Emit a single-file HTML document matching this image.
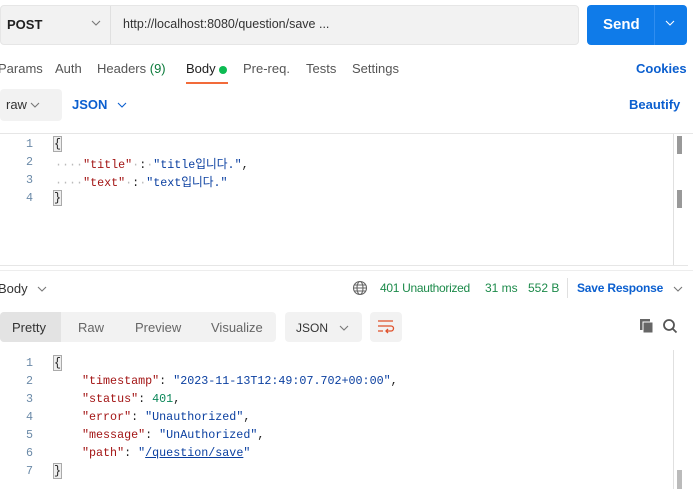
<!DOCTYPE html>
<html><head><meta charset="utf-8"><style>
*{margin:0;padding:0;box-sizing:border-box}
body{width:693px;height:489px;overflow:hidden;background:#fff;font-family:"Liberation Sans",sans-serif;font-size:13px;color:#212121;position:relative}
.a{position:absolute;white-space:nowrap}
.mono{font-family:"Liberation Mono","Noto Sans CJK KR",monospace;font-size:11.7px}
.ln{color:#6b8aa8;text-align:right;width:33px}
.k{color:#a31515}.s{color:#0a3fa0}.n{color:#098658}
.br{border:1px solid #aaa;background:#eee}
.g{color:#bbb}
</style></head><body>
<div class="a" style="left:0;top:5px;width:579px;height:40px;background:#f2f2f2;border:1px solid #e6e6e6;border-radius:4px"></div>
<div class="a" style="left:110px;top:6px;width:1px;height:38px;background:#e0e0e0"></div>
<div class="a" style="left:7px;top:17px;font-weight:bold;font-size:13px">POST</div>
<svg class="a" style="left:91px;top:20px" width="10" height="6" viewBox="0 0 10 6" fill="none" stroke="#777" stroke-width="1.1"><path d="M1 1l4 4 4-4"/></svg>
<div class="a" style="left:123px;top:17px;color:#333;font-size:12.5px">http://localhost:8080/question/save ...</div>
<div class="a" style="left:587px;top:5px;width:100px;height:40px;background:#0f7be9;border-radius:4px"></div>
<div class="a" style="left:654px;top:5px;width:1px;height:40px;background:#2f8df0"></div>
<div class="a" style="left:603px;top:16px;color:#fff;font-weight:bold;font-size:15px">Send</div>
<svg class="a" style="left:665px;top:20px" width="10" height="6" viewBox="0 0 10 6" fill="none" stroke="#fff" stroke-width="1.1"><path d="M1 1l4 4 4-4"/></svg>

<div class="a" style="left:-2px;top:61px;color:#555">Params</div>
<div class="a" style="left:55px;top:61px;color:#555">Auth</div>
<div class="a" style="left:97px;top:61px;color:#555">Headers <span style="color:#0a7a3a">(9)</span></div>
<div class="a" style="left:186px;top:61px;color:#212121">Body</div>
<div class="a" style="left:219px;top:66px;width:8px;height:8px;border-radius:50%;background:#0cbb52"></div>
<div class="a" style="left:186px;top:82px;width:42px;height:2px;background:#f26b3a"></div>
<div class="a" style="left:243px;top:61px;color:#555">Pre-req.</div>
<div class="a" style="left:306px;top:61px;color:#555">Tests</div>
<div class="a" style="left:352px;top:61px;color:#555">Settings</div>
<div class="a" style="left:636px;top:61px;color:#0b5fcf;font-weight:bold">Cookies</div>

<div class="a" style="left:0;top:89px;width:62px;height:32px;background:#f2f2f2;border-radius:4px"></div>
<div class="a" style="left:6px;top:97px;color:#333">raw</div>
<svg class="a" style="left:30px;top:102px" width="10" height="6" viewBox="0 0 10 6" fill="none" stroke="#777" stroke-width="1.1"><path d="M1 1l4 4 4-4"/></svg>
<div class="a" style="left:72px;top:97px;color:#0b5fcf;font-weight:bold">JSON</div>
<svg class="a" style="left:117px;top:102px" width="10" height="6" viewBox="0 0 10 6" fill="none" stroke="#0b5fcf" stroke-width="1.1"><path d="M1 1l4 4 4-4"/></svg>
<div class="a" style="left:629px;top:97px;color:#0b5fcf;font-weight:bold">Beautify</div>

<div class="a" style="left:0;top:133px;width:693px;height:1px;background:#e6e6e6"></div>
<div class="a" style="left:0;top:265px;width:688px;height:1px;background:#e6e6e6"></div>
<div class="a" style="left:673px;top:134px;width:1px;height:131px;background:#e0e0e0"></div>
<div class="a" style="left:677px;top:136px;width:5px;height:18px;background:#999"></div>
<div class="a" style="left:677px;top:190px;width:5px;height:18px;background:#999"></div>

<div class="a mono ln" style="top:137px">1</div>
<div class="a mono ln" style="top:155px">2</div>
<div class="a mono ln" style="top:173px">3</div>
<div class="a mono ln" style="top:191px">4</div>
<div class="a mono" style="left:53px;top:137px"><span class="br">{</span></div>
<div class="a mono" style="left:55px;top:155px"><span class="g">····</span><span class="k">"title"</span><span class="g">·</span>:<span class="g">·</span><span class="s">"title입니다."</span>,</div>
<div class="a mono" style="left:55px;top:173px"><span class="g">····</span><span class="k">"text"</span><span class="g">·</span>:<span class="g">·</span><span class="s">"text입니다."</span></div>
<div class="a mono" style="left:53px;top:191px"><span class="br">}</span></div>

<div class="a" style="left:0;top:270px;width:693px;height:1px;background:#ededed"></div>
<div class="a" style="left:-2px;top:281px;color:#333">Body</div>
<svg class="a" style="left:37px;top:286px" width="10" height="6" viewBox="0 0 10 6" fill="none" stroke="#777" stroke-width="1.1"><path d="M1 1l4 4 4-4"/></svg>
<svg class="a" style="left:352px;top:280px" width="16" height="16" viewBox="0 0 16 16" fill="none" stroke="#666" stroke-width="1.1"><circle cx="8" cy="8" r="6.5"/><ellipse cx="8" cy="8" rx="3" ry="6.5"/><path d="M1.5 8h13M2.5 5h11M2.5 11h11"/></svg>
<div class="a" style="left:380px;top:281px;color:#1c8a4a;font-size:12px;letter-spacing:-0.3px">401 Unauthorized</div>
<div class="a" style="left:485px;top:281px;color:#1c8a4a;font-size:12px">31 ms</div>
<div class="a" style="left:528px;top:281px;color:#1c8a4a;font-size:12px">552 B</div>
<div class="a" style="left:567px;top:278px;width:1px;height:20px;background:#e0e0e0"></div>
<div class="a" style="left:577px;top:281px;color:#0b5fcf;font-weight:bold;font-size:12px;letter-spacing:-0.2px">Save Response</div>
<svg class="a" style="left:673px;top:286px" width="10" height="6" viewBox="0 0 10 6" fill="none" stroke="#777" stroke-width="1.1"><path d="M1 1l4 4 4-4"/></svg>

<div class="a" style="left:0;top:312px;width:276px;height:30px;background:#f2f2f2;border-radius:4px"></div>
<div class="a" style="left:0;top:312px;width:61px;height:30px;background:#e3e3e3;border-radius:4px 0 0 4px"></div>
<div class="a" style="left:12px;top:320px;color:#333">Pretty</div>
<div class="a" style="left:78px;top:320px;color:#666">Raw</div>
<div class="a" style="left:135px;top:320px;color:#666">Preview</div>
<div class="a" style="left:211px;top:320px;color:#666">Visualize</div>
<div class="a" style="left:285px;top:312px;width:77px;height:30px;background:#f2f2f2;border-radius:4px"></div>
<div class="a" style="left:296px;top:321px;color:#333;font-size:12px">JSON</div>
<svg class="a" style="left:339px;top:325px" width="10" height="6" viewBox="0 0 10 6" fill="none" stroke="#777" stroke-width="1.1"><path d="M1 1l4 4 4-4"/></svg>
<div class="a" style="left:370px;top:312px;width:32px;height:30px;background:#f2f2f2;border-radius:4px"></div>
<svg class="a" style="left:377px;top:319px" width="18" height="16" viewBox="0 0 18 16" fill="none" stroke="#e0502a" stroke-width="1.3"><path d="M1 2h15M1 7h13a2.5 2.5 0 0 1 0 5H9M11 10l-2 2 2 2M1 12h5"/></svg>
<svg class="a" style="left:639px;top:318px" width="16" height="16" viewBox="0 0 16 16"><rect x="1" y="1" width="10" height="11" fill="#666"/><rect x="4" y="4" width="10" height="11" fill="#666" stroke="#fff" stroke-width="1"/></svg>
<svg class="a" style="left:662px;top:318px" width="16" height="16" viewBox="0 0 16 16" fill="none" stroke="#555" stroke-width="1.8"><circle cx="7" cy="7" r="5"/><path d="M10.5 10.5l4 4"/></svg>

<div class="a mono ln" style="top:356px">1</div>
<div class="a mono ln" style="top:374px">2</div>
<div class="a mono ln" style="top:392px">3</div>
<div class="a mono ln" style="top:410px">4</div>
<div class="a mono ln" style="top:428px">5</div>
<div class="a mono ln" style="top:446px">6</div>
<div class="a mono ln" style="top:464px">7</div>
<div class="a mono" style="left:53px;top:356px"><span class="br">{</span></div>
<div class="a mono" style="left:82px;top:374px"><span class="k">"timestamp"</span>: <span class="s">"2023-11-13T12:49:07.702+00:00"</span>,</div>
<div class="a mono" style="left:82px;top:392px"><span class="k">"status"</span>: <span class="n">401</span>,</div>
<div class="a mono" style="left:82px;top:410px"><span class="k">"error"</span>: <span class="s">"Unauthorized"</span>,</div>
<div class="a mono" style="left:82px;top:428px"><span class="k">"message"</span>: <span class="s">"UnAuthorized"</span>,</div>
<div class="a mono" style="left:82px;top:446px"><span class="k">"path"</span>: <span class="s">"<u>/question/save</u>"</span></div>
<div class="a mono" style="left:53px;top:464px"><span class="br">}</span></div>
<div class="a" style="left:673px;top:350px;width:1px;height:139px;background:#e0e0e0"></div>
<div class="a" style="left:677px;top:470px;width:5px;height:19px;background:#bbb"></div>
</body></html>
